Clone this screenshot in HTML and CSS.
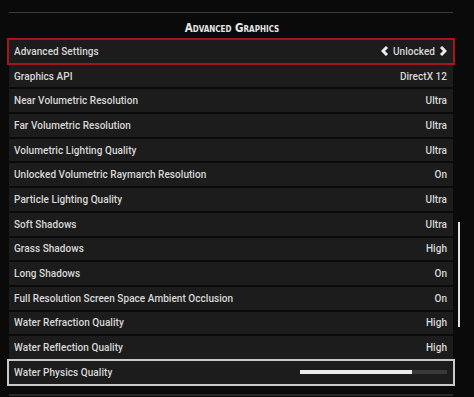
FILE: index.html
```html
<!DOCTYPE html>
<html>

<head>
    <meta charset="UTF-8">
    <title>Advanced Graphics</title>
    <link rel="stylesheet" href="styles.css">
</head>

<body>
    <div class="panel">
        <div class="top-line"></div>
        <h1 class="title">Advanced Graphics</h1>

        <div class="list">
            <div class="row locked">
                <span class="name">Advanced Settings</span>
                <span class="value">
                    <svg class="chev" viewBox="0 0 8 10" width="8" height="10"><path d="M6 1 L2 5 L6 9" /></svg>
                    Unlocked
                    <svg class="chev" viewBox="0 0 8 10" width="8" height="10"><path d="M2 1 L6 5 L2 9" /></svg>
                </span>
            </div>
            <div class="row"><span class="name">Graphics API</span><span class="value">DirectX 12</span></div>
            <div class="row"><span class="name">Near Volumetric Resolution</span><span class="value">Ultra</span></div>
            <div class="row"><span class="name">Far Volumetric Resolution</span><span class="value">Ultra</span></div>
            <div class="row"><span class="name">Volumetric Lighting Quality</span><span class="value">Ultra</span></div>
            <div class="row"><span class="name">Unlocked Volumetric Raymarch Resolution</span><span class="value">On</span></div>
            <div class="row"><span class="name">Particle Lighting Quality</span><span class="value">Ultra</span></div>
            <div class="row"><span class="name">Soft Shadows</span><span class="value">Ultra</span></div>
            <div class="row"><span class="name">Grass Shadows</span><span class="value">High</span></div>
            <div class="row"><span class="name">Long Shadows</span><span class="value">On</span></div>
            <div class="row"><span class="name">Full Resolution Screen Space Ambient Occlusion</span><span class="value">On</span></div>
            <div class="row"><span class="name">Water Refraction Quality</span><span class="value">High</span></div>
            <div class="row"><span class="name">Water Reflection Quality</span><span class="value">High</span></div>
            <div class="row selected">
                <span class="name">Water Physics Quality</span>
                <span class="slider"><span class="fill" style="width: 76%"></span></span>
            </div>
            <div class="row-peek"></div>
        </div>

        <div class="scrollbar"></div>
    </div>
</body>

</html>
```
FILE: styles.css
```css
html,
body {
    margin: 0;
    background-color: #0b0a0a;
    overflow: hidden;
}

body {
    font-family: Roboto, "Liberation Sans", Arial, sans-serif;
    color: #d8d8d8;
}

.panel {
    position: relative;
    width: 474px;
    height: 397px;
    padding: 12px 21px 0 9px;
    box-sizing: border-box;
}

.top-line {
    height: 1px;
    background-color: #3c3c3c;
}

.title {
    margin: 0;
    padding-top: 3px;
    height: 24px;
    line-height: 25px;
    text-align: center;
    font-family: "DejaVu Sans Condensed", "Liberation Sans", sans-serif;
    font-size: 11.5px;
    font-weight: bold;
    font-variant: small-caps;
    color: #e6e6e6;
    padding-left: 2px;
}

.list {
    display: flex;
    flex-direction: column;
    gap: 2px;
}

.row {
    display: flex;
    align-items: center;
    justify-content: space-between;
    height: 22.7px;
    padding: 0 6px 0 5px;
    background-color: #1d1c1c;
    font-size: 10px;
    font-weight: 500;
    letter-spacing: 0.05px;
    flex-shrink: 0;
}

.row-peek {
    height: 2px;
    background-color: #2a2929;
}

.value {
    display: flex;
    align-items: center;
    gap: 4px;
}

.chev {
    fill: none;
    stroke: #ededed;
    stroke-width: 3;
}

.locked {
    outline: 2px solid #a8141b;
}

.selected {
    outline: 2px solid #c9c9c9;
    margin-bottom: 8px;
}

.slider {
    display: block;
    width: 147px;
    height: 4px;
    background-color: #3a3939;
}

.fill {
    display: block;
    height: 100%;
    background-color: #ececec;
}

.scrollbar {
    position: absolute;
    left: 458px;
    top: 222px;
    width: 2px;
    height: 105px;
    background-color: #e2e2e2;
}
```
